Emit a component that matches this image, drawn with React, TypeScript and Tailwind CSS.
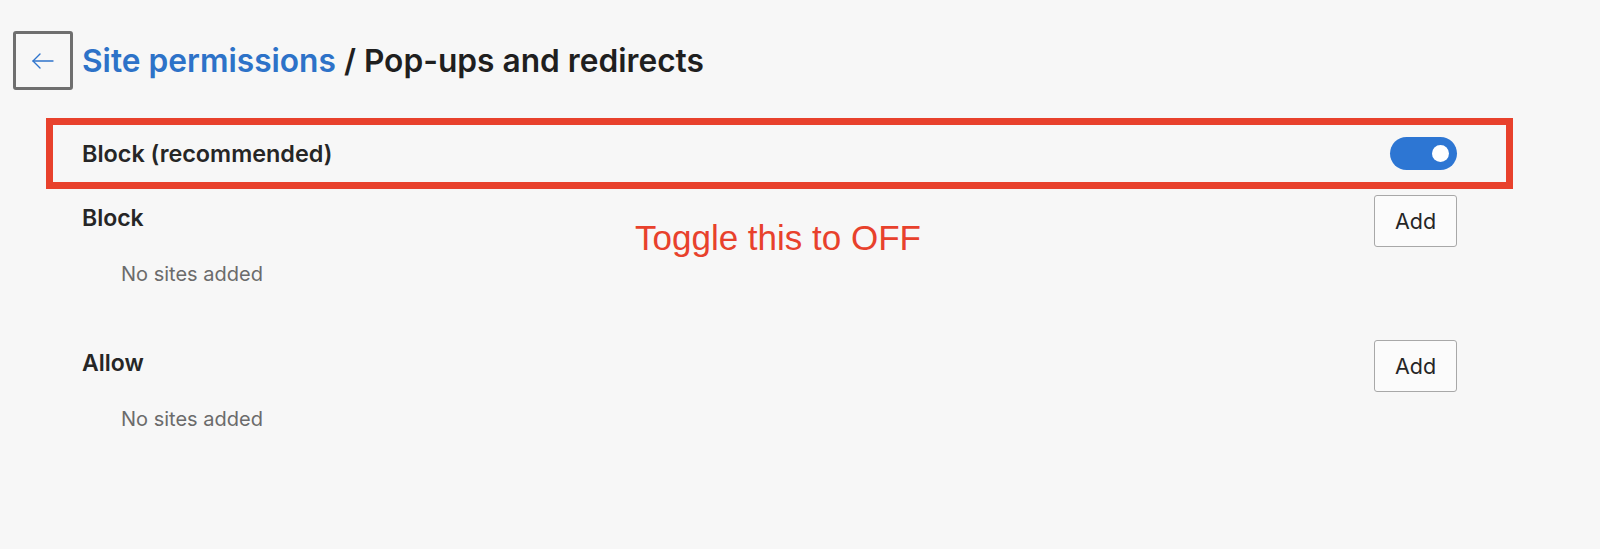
import React, { useState } from 'react';

function BackButton() {
  return (
    <button className="w-[60px] h-[59px] border-[3px] border-[#6f6f6f] rounded-[3px] flex items-center justify-center bg-[#f7f7f7]">
      <svg width="24" height="18" viewBox="0 0 24 18" fill="none" stroke="#2f74cc" strokeWidth="1.4" strokeLinecap="round" strokeLinejoin="round">
        <path d="M22 9H2" />
        <path d="M9 2L2 9l7 7" />
      </svg>
    </button>
  );
}

function Toggle({ on, onChange }: { on: boolean; onChange: (v: boolean) => void }) {
  return (
    <button
      onClick={() => onChange(!on)}
      className={`w-[67px] h-[33px] rounded-full flex items-center px-[8px] ${on ? 'bg-[#2d76d3] justify-end' : 'bg-[#bdbdbd] justify-start'}`}
    >
      <span className="w-[17px] h-[17px] rounded-full bg-white block" />
    </button>
  );
}

function SiteList({ title }: { title: string }) {
  return (
    <div className="flex flex-col">
      <div className="flex items-start justify-between">
        <div className="pt-[10px] text-[23px] font-semibold text-[#262626] leading-[26px]">{title}</div>
        <button className="w-[83px] h-[52px] border border-[#a8a8a8] rounded-[3px] bg-[#fbfbfb] text-[21.5px] text-[#262626]">
          Add
        </button>
      </div>
      <div className="pl-[39px] pt-[16px] text-[20px] text-[#6b6b6b] leading-[22px]">No sites added</div>
    </div>
  );
}

export default function App() {
  const [blocked, setBlocked] = useState(true);

  return (
    <div className="relative w-[1600px] h-[549px] bg-[#f7f7f7] overflow-hidden" style={{ fontFamily: 'Inter, "Open Sans", sans-serif' }}>
      <div className="flex items-center gap-[9px] pl-[13px] pt-[31px]">
        <BackButton />
        <h1 className="text-[31.7px] font-semibold leading-[36px] text-[#1f1f1f]">
          <span className="text-[#2d72c8]">Site permissions</span>
          <span> / Pop-ups and redirects</span>
        </h1>
      </div>

      <div className="pl-[82px] w-[1457px] pt-[28px] flex flex-col">
        <div className="-ml-[36px] -mr-[56px] h-[71px] border-[7px] border-[#e8412c] pl-[29px] pr-[49px] flex items-center justify-between">
          <span className="text-[23.4px] font-semibold text-[#262626]">Block (recommended)</span>
          <Toggle on={blocked} onChange={setBlocked} />
        </div>

        <div className="pt-[6px] flex flex-col gap-[55px]">
          <SiteList title="Block" />
          <SiteList title="Allow" />
        </div>
      </div>

      <div
        className="absolute left-[635px] top-[218px] text-[35px] text-[#e8412c] leading-[40px]"
        style={{ fontFamily: '"Liberation Sans", Arial, sans-serif' }}
      >
        Toggle this to OFF
      </div>
    </div>
  );
}
